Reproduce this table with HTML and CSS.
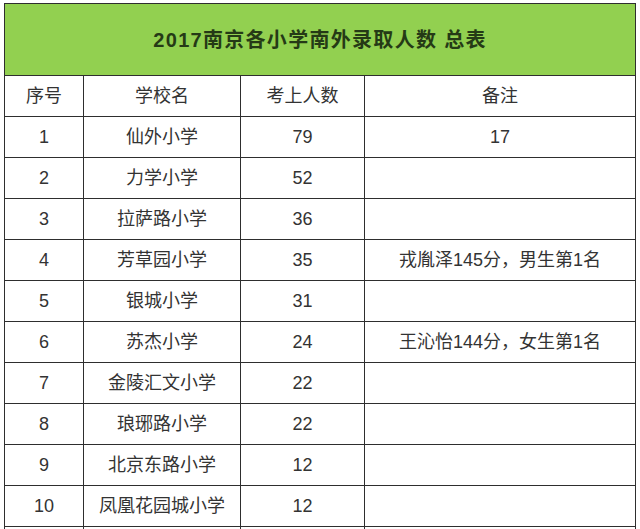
FILE: index.html
```html
<!DOCTYPE html>
<html lang="zh-CN">
<head>
<meta charset="utf-8">
<title>2017南京各小学南外录取人数 总表</title>
<link rel="stylesheet" href="styles.css">
</head>
<body>
<table class="sheet">
  <colgroup>
    <col class="c-no">
    <col class="c-school">
    <col class="c-count">
    <col class="c-note">
  </colgroup>
  <thead>
    <tr class="title-row"><th colspan="4">2017南京各小学南外录取人数 总表</th></tr>
    <tr class="head-row"><th>序号</th><th>学校名</th><th>考上人数</th><th>备注</th></tr>
  </thead>
  <tbody>
    <tr><td>1</td><td>仙外小学</td><td>79</td><td>17</td></tr>
    <tr><td>2</td><td>力学小学</td><td>52</td><td></td></tr>
    <tr><td>3</td><td>拉萨路小学</td><td>36</td><td></td></tr>
    <tr><td>4</td><td>芳草园小学</td><td>35</td><td>戎胤泽145分，男生第1名</td></tr>
    <tr><td>5</td><td>银城小学</td><td>31</td><td></td></tr>
    <tr><td>6</td><td>苏杰小学</td><td>24</td><td>王沁怡144分，女生第1名</td></tr>
    <tr><td>7</td><td>金陵汇文小学</td><td>22</td><td></td></tr>
    <tr><td>8</td><td>琅琊路小学</td><td>22</td><td></td></tr>
    <tr><td>9</td><td>北京东路小学</td><td>12</td><td></td></tr>
    <tr><td>10</td><td>凤凰花园城小学</td><td>12</td><td></td></tr>
    <tr><td></td><td></td><td></td><td></td></tr>
  </tbody>
</table>
</body>
</html>
```
FILE: styles.css
```css
html, body {
  margin: 0;
  padding: 0;
  background: #ffffff;
}
body {
  padding: 3px 0 0 4px;
  font-family: "Liberation Sans", "Noto Sans CJK SC", sans-serif;
  overflow: hidden;
}
.sheet {
  border-collapse: collapse;
  table-layout: fixed;
  width: 631px;
  color: #333333;
  font-size: 18px;
}
.c-no { width: 79px; }
.c-school { width: 157px; }
.c-count { width: 124px; }
.c-note { width: 271px; }
.sheet th,
.sheet td {
  border: 1.5px solid #2e2e2e;
  text-align: center;
  vertical-align: middle;
  padding: 0;
  height: 40px;
  font-weight: normal;
  line-height: 20px;
  white-space: nowrap;
}
.title-row th {
  background: #92d050;
  height: 71px;
  color: #253a16;
  font-weight: bold;
  font-size: 20px;
  letter-spacing: 1.3px;
}
```
